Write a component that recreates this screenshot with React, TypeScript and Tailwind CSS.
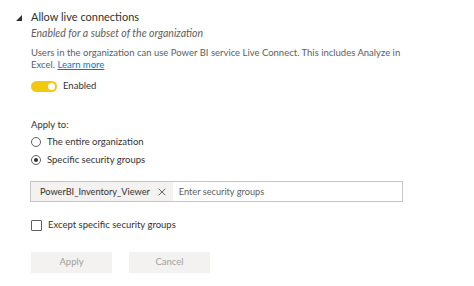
import { X } from 'lucide-react';

export default function App() {
  return (
    <div className="w-[474px] h-[286px] bg-white font-['Lato',sans-serif] text-[#323130]">
      <div className="flex pt-[9px] pl-[16px]">
        {/* expanded caret */}
        <svg width="6" height="6" viewBox="0 0 6 6" className="mt-[6px] shrink-0">
          <polygon points="6,0 6,6 0,6" fill="#323130" />
        </svg>

        <div className="ml-[9px] flex flex-col">
          <div className="text-[11px] leading-[16px] text-[#323130]">Allow live connections</div>
          <div className="italic text-[10.5px] leading-[14px] text-[#605e5c] mt-[1px]">Enabled for a subset of the organization</div>

          <p className="mt-[7px] w-[372px] text-[9.5px] leading-[12px] text-[#605e5c]">
            Users in the organization can use Power BI service Live Connect. This includes Analyze in Excel.{' '}
            <a className="text-[#0078d4] underline">Learn more</a>
          </p>

          {/* toggle */}
          <div className="mt-[9px] flex items-center gap-[6px]">
            <div className="w-[26px] h-[11px] rounded-full bg-[#f2c811] flex items-center justify-end pr-[2px]">
              <div className="w-[7px] h-[7px] rounded-full bg-white" />
            </div>
            <span className="text-[9.5px] leading-[12px] text-[#323130]">Enabled</span>
          </div>

          <div className="mt-[27px] text-[9.5px] leading-[12px] text-[#323130]">Apply to:</div>

          <div className="mt-[5px] flex flex-col gap-[6px]">
            <label className="flex items-center gap-[6px] text-[9.5px] leading-[12px]">
              <span className="w-[10px] h-[10px] rounded-full border border-[#605e5c]" />
              The entire organization
            </label>
            <label className="flex items-center gap-[6px] text-[9.5px] leading-[12px]">
              <span className="w-[10px] h-[10px] rounded-full border border-[#605e5c] flex items-center justify-center">
                <span className="w-[4px] h-[4px] rounded-full bg-[#323130]" />
              </span>
              Specific security groups
            </label>
          </div>

          {/* security group picker */}
          <div className="mt-[15px] -ml-[1px] w-[373px] h-[21px] border border-[#c8c6c4] flex items-center">
            <div className="h-full bg-[#f3f2f1] flex items-center pl-[9px] pr-[5px] gap-[6px] text-[9.2px] text-[#323130]">
              PowerBI_Inventory_Viewer
              <X className="w-[12px] h-[12px]" strokeWidth={1.5} />
            </div>
            <span className="ml-[6px] text-[9.2px] text-[#605e5c]">Enter security groups</span>
          </div>

          <label className="mt-[17px] flex items-center gap-[6px] text-[9.5px] leading-[12px]">
            <span className="w-[11px] h-[11px] border border-[#605e5c] rounded-[1px]" />
            Except specific security groups
          </label>

          <div className="mt-[21px] flex gap-[17px]">
            <button className="w-[81px] h-[21px] bg-[#f3f2f1] text-[9.5px] text-[#a19f9d]">Apply</button>
            <button className="w-[81px] h-[21px] bg-[#f3f2f1] text-[9.5px] text-[#a19f9d]">Cancel</button>
          </div>
        </div>
      </div>
    </div>
  );
}
